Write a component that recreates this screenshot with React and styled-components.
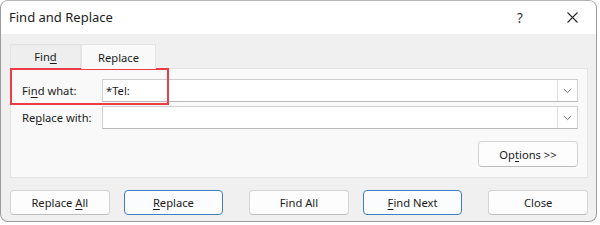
import React from 'react';
import styled, { createGlobalStyle } from 'styled-components';

const GlobalStyle = createGlobalStyle`
  html, body {
    margin: 0;
    padding: 0;
    background: #ffffff;
  }
  body {
    font-family: "Noto Sans", "Open Sans", sans-serif;
    color: #1b1b1b;
  }
`;

const Window = styled.div`
  width: 597px;
  height: 222px;
  box-sizing: border-box;
  border: 1px solid #9c9c9c;
  border-top-color: #b5b5b5;
  border-radius: 8px;
  overflow: hidden;
  background: #f0f0f0;
  display: flex;
  flex-direction: column;
`;

const TitleBar = styled.div`
  height: 33px;
  background: #ffffff;
  display: flex;
  align-items: center;
  padding-left: 8px;
`;

const Title = styled.div`
  flex: 1;
  font-size: 13px;
  padding-bottom: 1px;
`;

const TitleButton = styled.div`
  width: ${p => p.$w}px;
  height: 33px;
  display: flex;
  align-items: center;
  justify-content: center;
  font-size: 13.5px;
  color: #333;
`;

const Body = styled.div`
  position: relative;
  padding: 9px 8px 0 9px;
`;

const TabStrip = styled.div`
  display: flex;
  align-items: flex-end;
  height: 25px;
`;

const Tab = styled.div`
  width: ${p => p.$w}px;
  height: ${p => (p.$active ? 25 : 24)}px;
  box-sizing: border-box;
  display: flex;
  align-items: center;
  justify-content: center;
  font-size: 11.2px;
  background: ${p => (p.$active ? '#f9f9f9' : '#eeeeee')};
  border: 1px solid #e3e3e3;
  border-bottom: none;
  margin-bottom: ${p => (p.$active ? -1 : 0)}px;
  position: relative;
  z-index: ${p => (p.$active ? 1 : 0)};
`;

const Panel = styled.div`
  width: 578px;
  height: 110px;
  box-sizing: border-box;
  background: #f9f9f9;
  border: 1px solid #e3e3e3;
  padding: 10px 9px 0 11px;
  display: flex;
  flex-direction: column;
`;

const FieldRow = styled.div`
  display: flex;
  align-items: center;
  margin-bottom: 4px;
`;

const Label = styled.div`
  width: 80px;
  font-size: 11.2px;
`;

const Combo = styled.div`
  flex: 1;
  height: 23px;
  box-sizing: border-box;
  border: 1px solid #cfcfcf;
  border-bottom-color: #b8b8b8;
  background: #ffffff;
  display: flex;
  align-items: stretch;
`;

const ComboText = styled.div`
  flex: 1;
  font-size: 11.2px;
  padding-left: 3px;
  display: flex;
  align-items: center;
`;

const ComboArrow = styled.div`
  width: 19px;
  border-left: 1px solid #e0e0e0;
  display: flex;
  align-items: center;
  justify-content: center;
`;

const OptionsRow = styled.div`
  display: flex;
  justify-content: flex-end;
  margin-top: 8px;
`;

const Button = styled.div`
  width: ${p => p.$w || 100}px;
  height: ${p => p.$h || 25}px;
  box-sizing: border-box;
  border-radius: 4px;
  border: 1px solid ${p => (p.$default ? '#3f7fc0' : '#d4d4d4')};
  border-bottom-color: ${p => (p.$default ? '#3f7fc0' : '#bdbdbd')};
  background: ${p => (p.$default ? '#fbfcfd' : '#fdfdfd')};
  display: flex;
  align-items: center;
  justify-content: center;
  font-size: 11.2px;
  margin-left: ${p => p.$ml || 0}px;
`;

const ButtonRow = styled.div`
  display: flex;
  margin-top: 12px;
`;

const Highlight = styled.div`
  position: absolute;
  left: 9px;
  top: 34px;
  width: 159px;
  height: 37px;
  box-sizing: border-box;
  border: 2.5px solid #ec3b44;
`;

const U = styled.span`
  text-decoration: underline;
  text-underline-offset: 2px;
`;

const Chevron = () => (
  <svg width="9" height="6" viewBox="0 0 9 6">
    <path d="M0.8 1 L4.5 4.6 L8.2 1" fill="none" stroke="#6f6f6f" strokeWidth="1" />
  </svg>
);

const CloseIcon = () => (
  <svg width="11" height="11" viewBox="0 0 11 11">
    <path d="M0.5 0.5 L10.5 10.5 M10.5 0.5 L0.5 10.5" stroke="#2b2b2b" strokeWidth="1.1" />
  </svg>
);

export default function App() {
  return (
    <>
      <GlobalStyle />
      <Window>
        <TitleBar>
          <Title>Find and Replace</Title>
          <TitleButton $w={62}>?</TitleButton>
          <TitleButton $w={42}><CloseIcon /></TitleButton>
          <div style={{ width: 3 }} />
        </TitleBar>
        <Body>
          <TabStrip>
            <Tab $w={71}><span>Fin<U>d</U></span></Tab>
            <Tab $w={75} $active><span>Replace</span></Tab>
          </TabStrip>
          <Panel>
            <FieldRow>
              <Label>Fi<U>n</U>d what:</Label>
              <Combo>
                <ComboText>*Tel:</ComboText>
                <ComboArrow><Chevron /></ComboArrow>
              </Combo>
            </FieldRow>
            <FieldRow>
              <Label>Re<U>p</U>lace with:</Label>
              <Combo>
                <ComboText />
                <ComboArrow><Chevron /></ComboArrow>
              </Combo>
            </FieldRow>
            <OptionsRow>
              <Button $w={100} $h={26}><span>Op<U>t</U>ions &gt;&gt;</span></Button>
            </OptionsRow>
          </Panel>
          <ButtonRow>
            <Button><span>Replace <U>A</U>ll</span></Button>
            <Button $default $ml={14}><span><U>R</U>eplace</span></Button>
            <Button $ml={26}><span>Find All</span></Button>
            <Button $default $ml={14}><span><U>F</U>ind Next</span></Button>
            <Button $ml={26}><span>Close</span></Button>
          </ButtonRow>
          <Highlight />
        </Body>
      </Window>
    </>
  );
}
